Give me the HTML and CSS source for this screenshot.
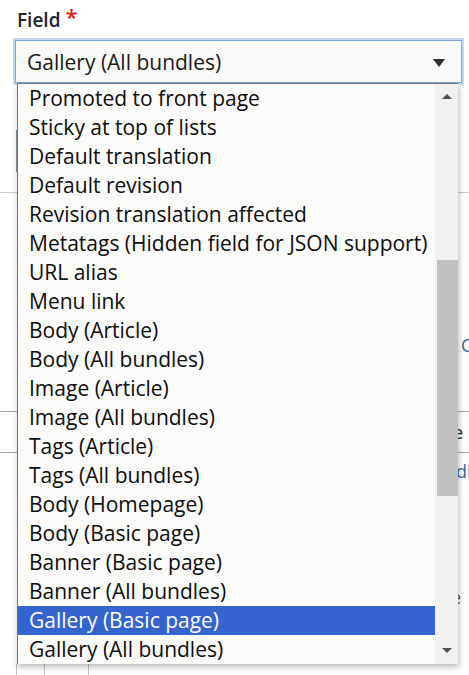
FILE: index.html
```html
<!DOCTYPE html>
<html>
<head>
<meta charset="utf-8">
<link rel="stylesheet" href="styles.css">
</head>
<body>
<div class="page">
  <div class="field">
    <label class="label">Field <span class="req">*</span></label>
    <div class="select">
      <span class="select-value">Gallery (All bundles)</span>
      <span class="select-arrow"></span>
    </div>
  </div>

  <div class="behind">
    <div class="fs-edge"></div>
    <div class="rule rule-1"></div>
    <div class="peek peek-c">C</div>
    <div class="table">
      <div class="trow thead"><span class="peek-text">Type</span></div>
      <div class="trow tlink"><span class="peek-text link">Edit</span></div>
      <div class="trow tgray"><span class="peek-text gray">None</span></div>
    </div>
    <div class="cols">
      <div class="col c1"></div>
      <div class="col c2"></div>
      <div class="col c3"></div>
    </div>
  </div>

  <div class="popup">
    <ul class="options">
      <li class="opt">Promoted to front page</li>
      <li class="opt">Sticky at top of lists</li>
      <li class="opt">Default translation</li>
      <li class="opt">Default revision</li>
      <li class="opt">Revision translation affected</li>
      <li class="opt">Metatags (Hidden field for JSON support)</li>
      <li class="opt">URL alias</li>
      <li class="opt">Menu link</li>
      <li class="opt">Body (Article)</li>
      <li class="opt">Body (All bundles)</li>
      <li class="opt">Image (Article)</li>
      <li class="opt">Image (All bundles)</li>
      <li class="opt">Tags (Article)</li>
      <li class="opt">Tags (All bundles)</li>
      <li class="opt">Body (Homepage)</li>
      <li class="opt">Body (Basic page)</li>
      <li class="opt">Banner (Basic page)</li>
      <li class="opt">Banner (All bundles)</li>
      <li class="opt selected">Gallery (Basic page)</li>
      <li class="opt">Gallery (All bundles)</li>
    </ul>
    <div class="scrollbar">
      <span class="sb-up"></span>
      <div class="sb-track"><div class="sb-thumb"></div></div>
      <span class="sb-down"></span>
    </div>
  </div>
</div>
</body>
</html>
```

FILE: styles.css
```css
html, body {
  margin: 0;
  padding: 0;
  background: #ffffff;
}

.page {
  position: relative;
  width: 469px;
  height: 675px;
  overflow: hidden;
  font-family: "Open Sans", "Noto Sans", sans-serif;
  color: #222330;
}

.field {
  padding: 7px 0 0 15px;
}

.label {
  display: block;
  font-size: 19px;
  font-weight: 600;
  line-height: 27px;
  height: 27px;
  padding-left: 2px;
  margin-bottom: 6px;
}

.req {
  color: #d72222;
  font-size: 22px;
  line-height: 0;
  vertical-align: 2px;
}

.select {
  box-sizing: border-box;
  width: 447px;
  height: 43px;
  border: 1px solid #7fa6dc;
  box-shadow: 0 0 0 2px #c3d7f3;
  background: #f9f9f8;
  display: flex;
  align-items: center;
  justify-content: space-between;
  padding: 0 16px 0 11px;
}

.select-value {
  font-size: 21px;
  line-height: 28px;
  color: #1a1a1a;
}

.select-arrow {
  width: 0;
  height: 0;
  border-left: 6.5px solid transparent;
  border-right: 6.5px solid transparent;
  border-top: 8px solid #2e2e2e;
  margin-top: 2px;
}

/* content behind the popup */
.behind {
  padding-top: 47px;
}

.fs-edge {
  margin-left: 16px;
  width: 1px;
  height: 42px;
  background: #8e929c;
}

.rule {
  height: 1px;
  background: #c8cad0;
}

.rule-1 {
  margin-top: 20px;
}

.peek {
  white-space: nowrap;
  font-size: 18px;
  line-height: 24px;
}

.peek-c {
  margin-top: 140px;
  padding-left: 461px;
  color: #2f6ba8;
}

.table {
  margin-top: 54px;
}

.trow {
  white-space: nowrap;
  font-size: 18px;
  display: flex;
}

.thead {
  border-top: 1px solid #a8aab0;
  height: 40px;
  line-height: 40px;
  justify-content: flex-end;
  padding-right: 6px;
}

.tlink {
  border-top: 1px solid #a8aab0;
  height: 40px;
  line-height: 36px;
  padding-left: 446px;
}

.tgray {
  padding-top: 92px;
  line-height: 24px;
  justify-content: flex-end;
  padding-right: 8px;
}

.link {
  color: #2f6ba8;
}

.gray {
  color: #55565b;
}

.cols {
  display: flex;
  margin-top: 55px;
  height: 20px;
}

.col {
  width: 1px;
  height: 20px;
  background: #bfc0c4;
}

.c1 { margin-left: 16px; }
.c2 { margin-left: 27px; }
.c3 { margin-left: 43px; }

/* popup list (native select dropdown) */
.popup {
  position: absolute;
  left: 17px;
  top: 83px;
  width: 441px;
  height: 581px;
  box-sizing: border-box;
  border-left: 1px solid #767676;
  border-top: 1px solid #767676;
  background: #fbfbfa;
  box-shadow: 1px 3px 6px rgba(0, 0, 0, 0.28);
  display: flex;
  z-index: 2;
}

.options {
  list-style: none;
  margin: 0;
  padding: 0;
  flex: 1;
}

.opt {
  height: 29px;
  line-height: 29px;
  padding-left: 11px;
  font-size: 21px;
  color: #0d0d0d;
  white-space: nowrap;
}

.opt.selected {
  background: #3464cf;
  color: #ffffff;
}

.scrollbar {
  width: 23px;
  background: #f1f1f1;
  display: flex;
  flex-direction: column;
  align-items: center;
}

.sb-up, .sb-down {
  display: block;
  width: 0;
  height: 0;
  border-left: 5.5px solid transparent;
  border-right: 5.5px solid transparent;
  margin: 10px 0 0 1px;
}

.sb-up {
  border-bottom: 5.5px solid #505050;
}

.sb-down {
  border-top: 5.5px solid #505050;
  margin: 0 0 11px 1px;
}

.sb-track {
  flex: 1;
  width: 100%;
  padding-top: 161px;
  box-sizing: border-box;
}

.sb-thumb {
  margin-left: 2px;
  width: 21px;
  height: 236px;
  background: #c1c1c1;
}
```
